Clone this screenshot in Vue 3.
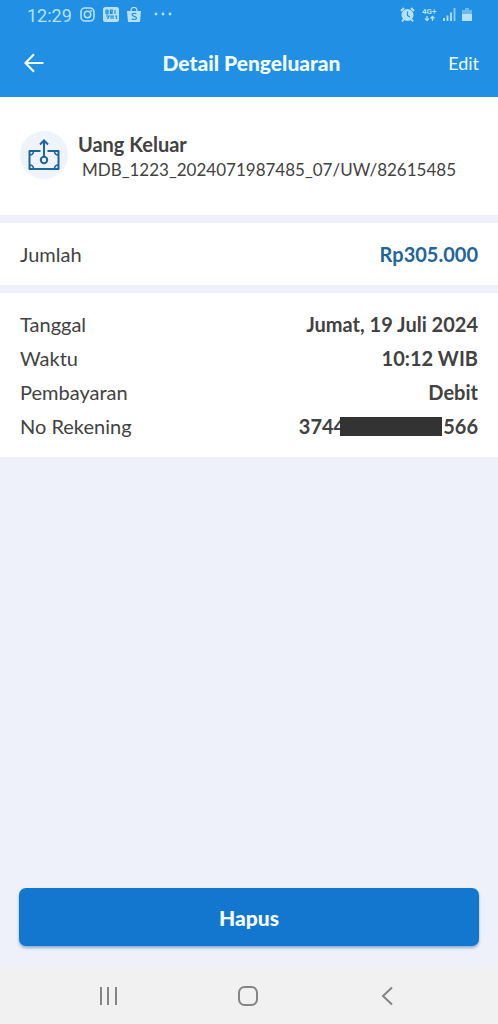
<script setup>
const details = [
  { label: 'Tanggal', value: 'Jumat, 19 Juli 2024' },
  { label: 'Waktu', value: '10:12 WIB' },
  { label: 'Pembayaran', value: 'Debit' },
]
</script>

<template>
  <div class="screen">
    <header class="top">
      <div class="status">
        <span class="clock">12:29</span>
        <svg class="left-icons" width="93" height="16" viewBox="0 0 93 16" aria-hidden="true">
          <g fill="none" stroke="currentColor" stroke-width="1.6">
            <rect x="1" y="1" width="13" height="13" rx="4" />
            <circle cx="7.500" cy="7.500" r="3.200" />
          </g>
          <circle cx="11.300" cy="3.800" r="1" fill="currentColor" />
          <rect x="23" y="0" width="16" height="15" rx="2.500" fill="currentColor" />
          <g class="cut">
            <path d="M26 3v4M26 3h2v2h-2h2v2h-2M30.500 7V3h1.800v2h-1.800l2 2M35 3v4" />
            <path d="M26 9h3l-1.500 3M31 12V9h2v3M35 9h1.500v3" />
          </g>
          <path d="M47 4h14l-1 11H48z" fill="currentColor" />
          <path d="M51 4c0-5 6-5 6 0" fill="none" stroke="currentColor" stroke-width="1.300" />
          <path class="cut" d="M56.300 7c-1.500-1.300-4.300-.8-4.300.8 0 2 4.500 1.200 4.500 3.200 0 1.700-3.200 2-4.800.7" />
          <g fill="currentColor">
            <circle cx="76" cy="7" r="1.400" />
            <circle cx="83" cy="7" r="1.400" />
            <circle cx="90" cy="7" r="1.400" />
          </g>
        </svg>
        <svg class="right-icons" width="72" height="16" viewBox="0 0 72 16" aria-hidden="true">
          <circle cx="7.500" cy="8" r="6" fill="currentColor" />
          <path d="M1 4l3-3M14 4l-3-3M3.500 12.500L2 14.500M11.500 12.500L13 14.500" stroke="currentColor" stroke-width="2" />
          <path class="cut" d="M7.500 4.500V8.500l2.500 1.500" />
          <text x="22" y="7">4G+</text>
          <path d="M27 9v4.500M25 11.500l2 2 2-2M32.500 14V9.500M30.500 11.500l2-2 2 2" fill="none" stroke="currentColor" stroke-width="1.300" />
          <path d="M44 14v-3M47.500 14V8.500M51 14V5.500" stroke="currentColor" stroke-width="1.800" />
          <path d="M54.500 14V1" stroke="currentColor" stroke-width="1.800" opacity=".75" />
          <path d="M62 3h3V1h4v2h3v5H62z" fill="currentColor" opacity=".5" />
          <path d="M62 7h10v7H62z" fill="currentColor" />
        </svg>
      </div>
      <div class="bar">
        <button class="back" type="button" aria-label="Kembali">
          <svg width="20" height="20" viewBox="0 0 20 20" fill="none" stroke="currentColor" stroke-width="2.200">
            <path d="M19.500 10H2M10 1.200L1.500 10 10 18.800" />
          </svg>
        </button>
        <h1>Detail Pengeluaran</h1>
        <button class="edit" type="button">Edit</button>
      </div>
    </header>

    <main>
      <section class="card summary">
        <span class="badge">
          <svg width="32" height="32" viewBox="0 0 32 32" fill="none" stroke="currentColor" stroke-width="2" aria-hidden="true">
            <path d="M12.500 12H1.500v18h29V12h-11" stroke-linejoin="round" />
            <path d="M16 17.500V2M12 5.500L16 1.500l4 4" />
            <circle cx="16" cy="21" r="3.200" />
            <path d="M1.500 16c2.500 0 4-1.500 4-4M30.500 16c-2.500 0-4-1.500-4-4M1.500 26c2.500 0 4 1.500 4 4M30.500 26c-2.500 0-4 1.500-4 4" stroke-width="1.600" />
          </svg>
        </span>
        <div class="summary-text">
          <h2>Uang Keluar</h2>
          <p>MDB_1223_2024071987485_07/UW/82615485</p>
        </div>
      </section>

      <dl class="card amount">
        <div class="row">
          <dt>Jumlah</dt>
          <dd class="money">Rp305.000</dd>
        </div>
      </dl>

      <dl class="card details">
        <div v-for="item in details" :key="item.label" class="row">
          <dt>{{ item.label }}</dt>
          <dd>{{ item.value }}</dd>
        </div>
        <div class="row">
          <dt>No Rekening</dt>
          <dd class="account"><span>3744</span><span class="mask"></span><span>566</span></dd>
        </div>
      </dl>
    </main>

    <div class="action">
      <button class="delete" type="button">Hapus</button>
    </div>

    <nav class="system">
      <button type="button" aria-label="Aplikasi terbaru">
        <svg width="20" height="20" viewBox="0 0 20 20" stroke="currentColor" stroke-width="2">
          <path d="M3 1v18M10 1v18M18 1v18" />
        </svg>
      </button>
      <button type="button" aria-label="Beranda">
        <svg width="20" height="20" viewBox="0 0 20 20" fill="none" stroke="currentColor" stroke-width="2">
          <rect x="1" y="1" width="18" height="18" rx="5.500" />
        </svg>
      </button>
      <button type="button" aria-label="Kembali ke layar sebelumnya">
        <svg width="20" height="20" viewBox="0 0 20 20" fill="none" stroke="currentColor" stroke-width="2">
          <path d="M14 1.500L5 10l9 8.500" />
        </svg>
      </button>
    </nav>
  </div>
</template>

<style>
body {
  margin: 0;
}
</style>

<style scoped>
.screen {
  display: flex;
  flex-direction: column;
  min-height: 100vh;
  background: #eff1fa;
  color: #424242;
  font-family: Lato, "Liberation Sans", sans-serif;
  font-size: 20px;
}

button {
  padding: 0;
  border: 0;
  background: none;
  color: inherit;
  font: inherit;
  cursor: pointer;
}

svg {
  display: block;
}

h1,
h2,
p,
dl,
dd {
  margin: 0;
}

.top {
  background: #208fe4;
  color: #f0fcff;
}

.status {
  display: flex;
  align-items: center;
  height: 30px;
  padding: 0 26px 0 27px;
  color: #b5e2fa;
}

.clock {
  font-family: Roboto, sans-serif;
  font-size: 18px;
}

.left-icons {
  margin-left: 8px;
}

.right-icons {
  margin-left: auto;
}

.cut {
  fill: none;
  stroke: #208fe4;
  stroke-width: 1.2;
}

.status text {
  fill: currentColor;
  font: bold 8px Roboto, sans-serif;
}

.bar {
  display: grid;
  grid-template-columns: 60px 1fr 60px;
  align-items: center;
  height: 66px;
  padding: 0 19px 1px 24px;
}

.back {
  justify-self: start;
}

h1 {
  font-size: 21px;
  font-weight: 900;
  line-height: 26px;
  text-align: center;
}

.edit {
  justify-self: end;
  font-size: 18px;
}

main {
  display: flex;
  flex-direction: column;
  gap: 8px;
}

.card {
  background: #fff;
  padding: 14px 20px;
}

.summary {
  display: flex;
  align-items: flex-start;
  gap: 10px;
  padding: 34px 20px 32px;
}

.badge {
  display: grid;
  place-items: center;
  flex: none;
  width: 48px;
  height: 48px;
  border-radius: 50%;
  background: #eff3fb;
  color: #1f659d;
}

h2 {
  font-size: 20px;
  font-weight: 700;
  line-height: 26px;
}

.summary-text p {
  padding-left: 4px;
  font-size: 17px;
  line-height: 26px;
}

.row {
  display: flex;
  justify-content: space-between;
  line-height: 34px;
}

dd {
  font-weight: 700;
}

.money {
  color: #22659b;
}

.account {
  display: flex;
  align-items: center;
}

.mask {
  width: 102px;
  height: 19px;
  margin-left: -5px;
  margin-right: 1px;
  background: #333;
  position: relative;
}

.action {
  margin-top: auto;
  padding: 20px 19px 21px;
}

.delete {
  width: 100%;
  height: 58px;
  border-radius: 7px;
  background: #1377d0;
  box-shadow: 0 2px 3px #8facd4;
  color: #f4fcff;
  font-size: 21px;
  font-weight: 900;
}

.system {
  display: flex;
  justify-content: space-between;
  align-items: center;
  height: 57px;
  padding: 0 100px 0 98px;
  background: #f1f1f1;
  color: #858585;
}
</style>
